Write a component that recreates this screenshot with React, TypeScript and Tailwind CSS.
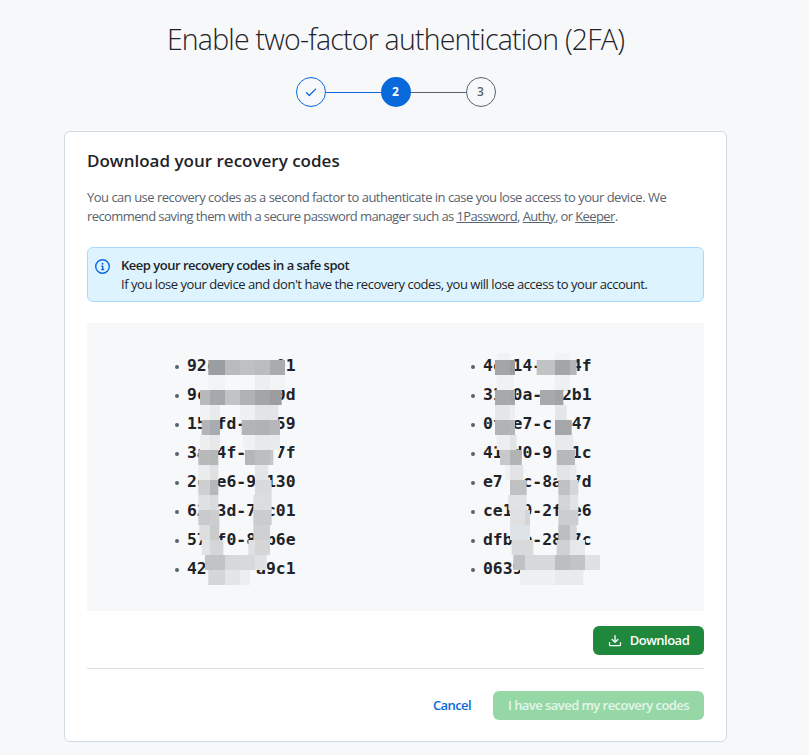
const font = "font-['Open_Sans',sans-serif]";

type Seg = [number, number, string];
type Row = [number, Seg[]];

const leftSmudge: Row[] = [
  [360, [[145, 195, "#9a9ea3"], [195, 240, "#b9bbbd"], [240, 285, "#bfc0c2"], [285, 330, "#bbbcbe"], [330, 375, "#a9abae"]]],
  [375, [[145, 195, "#f3f4f5"], [285, 330, "#eceef0"], [330, 375, "#f3f4f5"]]],
  [390, [[120, 150, "#b7b9bb"], [150, 195, "#a5a9ae"], [195, 240, "#c2c3c5"], [240, 285, "#b0b1b3"], [285, 330, "#a4a5a7"], [330, 365, "#9c9d9f"]]],
  [405, [[120, 150, "#f1f2f3"], [150, 180, "#e8eaec"], [240, 285, "#eff0f1"], [285, 355, "#e3e4e6"]]],
  [420, [[125, 150, "#b3b5b8"], [150, 180, "#a8abaf"], [245, 285, "#b3b4b6"], [285, 330, "#b1b2b4"], [330, 360, "#b6b7b9"]]],
  [435, [[120, 150, "#edeef0"], [150, 180, "#e6e8ea"], [250, 285, "#f0f1f2"], [285, 330, "#e8e9ea"], [330, 360, "#e9eaeb"]]],
  [450, [[115, 150, "#b8b9bb"], [150, 175, "#b5b6b8"], [255, 285, "#b5b6b8"], [285, 330, "#bdbec0"], [330, 340, "#c5c6c8"]]],
  [465, [[115, 150, "#eaecee"], [150, 175, "#dfe1e3"], [285, 325, "#e4e5e7"]]],
  [480, [[115, 150, "#cdcfd1"], [150, 175, "#b5b8ba"], [285, 335, "#d9dadc"]]],
  [495, [[115, 150, "#dfe1e3"], [150, 175, "#d9dbdd"], [280, 335, "#dcdddf"]]],
  [510, [[115, 150, "#c8cacc"], [150, 178, "#cbcdcf"], [280, 335, "#cbcccd"]]],
  [525, [[118, 150, "#dcdee0"], [150, 178, "#c9cbcd"], [280, 330, "#cfd0d2"]]],
  [540, [[125, 150, "#e1e3e5"], [150, 190, "#d4d6d8"], [265, 285, "#dfe0e2"], [285, 330, "#d5d6d8"]]],
  [555, [[135, 195, "#c2c3c5"], [195, 240, "#d6d8da"], [240, 285, "#d7d9db"], [285, 320, "#dfe1e3"]]],
  [570, [[145, 195, "#d4d6d8"], [195, 240, "#e3e5e7"], [240, 270, "#eceef0"]]],
];

const rightSmudge: Row[] = [
  [353, [[110, 150, "#f1f2f4"], [285, 330, "#f2f3f4"]]],
  [360, [[105, 150, "#a4a5a7"], [150, 165, "#9a9c9e"], [230, 285, "#c1c2c4"], [285, 330, "#a4a5a7"], [330, 350, "#b4b5b7"]]],
  [375, [[110, 160, "#f0f1f2"], [285, 330, "#eff0f1"]]],
  [390, [[105, 150, "#a8a9ab"], [150, 165, "#a5a7aa"], [240, 285, "#a8a9ab"], [285, 310, "#a2a3a5"]]],
  [405, [[105, 150, "#e5e6e8"], [150, 165, "#eceef0"], [285, 320, "#e4e6e8"]]],
  [420, [[105, 150, "#b1b4b7"], [150, 165, "#b3b6b9"], [285, 335, "#a5a6a8"]]],
  [435, [[110, 150, "#eceef0"], [150, 170, "#e1e3e5"], [285, 340, "#e9eaec"]]],
  [450, [[120, 150, "#c6c8ca"], [150, 185, "#b1b3b5"], [290, 345, "#b7b8ba"]]],
  [465, [[135, 150, "#f0f1f3"], [150, 190, "#e1e3e5"], [290, 330, "#e2e4e6"], [330, 350, "#e9eaec"]]],
  [480, [[150, 200, "#bfc1c3"], [295, 330, "#bfc2c4"], [330, 355, "#d5d6d8"]]],
  [495, [[145, 200, "#e0e2e4"], [295, 330, "#d3d5d7"], [330, 355, "#e1e3e5"]]],
  [510, [[150, 195, "#dfe0e2"], [195, 210, "#d3d5d7"], [295, 355, "#cccdd0"]]],
  [525, [[150, 210, "#dee3e7"], [295, 330, "#bdbec0"], [330, 350, "#d3d5d7"]]],
  [540, [[155, 220, "#d8dadc"], [290, 330, "#d0d1d3"], [330, 375, "#e6e8ea"]]],
  [555, [[160, 195, "#bfc2c5"], [195, 285, "#d6d8da"], [285, 330, "#bdbec0"], [330, 375, "#c2c3c5"], [375, 420, "#dfe1e3"]]],
  [570, [[180, 285, "#eef0f2"], [285, 370, "#e8eaec"]]],
];

function Smudge({ rows, originX }: { rows: Row[]; originX: number }) {
  return (
    <>
      {rows.map(([y, segs]) =>
        segs.map(([a, b, c]) => (
          <rect
            key={`${y}-${a}`}
            x={originX + a / 3}
            y={y}
            width={(b - a) / 3}
            height={y === 353 ? 7 : 15}
            fill={c}
          />
        )),
      )}
    </>
  );
}

const left = ["92c      01", "9c       0d", "15 fd-   59", "3a 4f-   7f", "2c e6-9 130", "62 3d-7 c01", "57 f0-8 b6e", "42     a9c1"];
const right = ["4c 14-   4f", "31 0a-  2b1", "0f e7-c b47", "41 d0-9  1c", "e7  c-8a 7d", "ce1 9-2f e6", "dfb e-28 7c", "0639"];

function Codes({ items }: { items: string[] }) {
  return (
    <ul className="flex flex-col">
      {items.map((c) => (
        <li key={c} className="flex h-[29px] items-center gap-[8px] font-['DejaVu_Sans_Mono',monospace] text-[16.4px] font-bold whitespace-pre text-[#1f2328]">
          <span className="size-[4px] rounded-full bg-[#59636e]" />
          <span>{c}</span>
        </li>
      ))}
    </ul>
  );
}

export default function App() {
  return (
    <div className={`min-h-[755px] bg-[#f6f8fa] ${font} text-[#1f2328]`}>
      <div className="flex w-[791px] flex-col items-center pt-[17px]">
        <h1 className="h-[45px] text-[28.5px] leading-[45px] font-light tracking-[-0.8px] whitespace-nowrap">
          Enable two-factor authentication (2FA)
        </h1>
        <div className="mt-[15px] flex items-center">
          <div className="flex size-[30px] items-center justify-center rounded-full border border-[#0969da] text-[#0969da]">
            <svg viewBox="0 0 16 16" className="size-[14px]" fill="currentColor">
              <path d="M13.78 4.22a.75.75 0 0 1 0 1.06l-7.25 7.25a.75.75 0 0 1-1.06 0L2.22 9.28a.751.751 0 0 1 .018-1.042.751.751 0 0 1 1.042-.018L6 10.94l6.72-6.72a.75.75 0 0 1 1.06 0Z" />
            </svg>
          </div>
          <div className="h-px w-[55px] bg-[#0969da]" />
          <div className="flex size-[30px] items-center justify-center rounded-full bg-[#0969da] text-[12px] font-bold text-white">2</div>
          <div className="h-px w-[55px] bg-[#59636e]" />
          <div className="flex size-[30px] items-center justify-center rounded-full border border-[#59636e] text-[12px] font-semibold text-[#59636e]">3</div>
        </div>
        <div className="mt-[24px] w-[663px] rounded-md border border-[#d1d9e0] bg-white px-[22px] pt-[16px] pb-[21px]">
          <h2 className="text-[17px] leading-[26px] font-semibold">Download your recovery codes</h2>
          <p className="mt-[14px] text-[13px] leading-[19px] tracking-[-0.51px] whitespace-nowrap text-[#59636e]">
            You can use recovery codes as a second factor to authenticate in case you lose access to your device. We
            <br />
            <span className="tracking-[-0.6px]">
              recommend saving them with a secure password manager such as <a className="underline">1Password</a>,{" "}
              <a className="underline">Authy</a>, or <a className="underline">Keeper</a>.
            </span>
          </p>
          <div className="mt-[21px] flex h-[55px] items-start gap-[11px] rounded-md border border-[#a8d8ff] bg-[#ddf4ff] px-[7px] pt-[8px] text-[13px] leading-[19px] tracking-[-0.46px]">
            <svg viewBox="0 0 16 16" className="mt-[3px] size-[15px] shrink-0" fill="#0969da">
              <path d="M0 8a8 8 0 1 1 16 0A8 8 0 0 1 0 8Zm8-6.5a6.5 6.5 0 1 0 0 13 6.5 6.5 0 0 0 0-13ZM6.5 7.75A.75.75 0 0 1 7.25 7h1a.75.75 0 0 1 .75.75v2.75h.25a.75.75 0 0 1 0 1.5h-2a.75.75 0 0 1 0-1.5h.25v-2h-.25a.75.75 0 0 1-.75-.75ZM8 6a1 1 0 1 1 0-2 1 1 0 0 1 0 2Z" />
            </svg>
            <div className="whitespace-nowrap">
              <div className="font-semibold tracking-[-0.5px]">Keep your recovery codes in a safe spot</div>
              <div>If you lose your device and don't have the recovery codes, you will lose access to your account.</div>
            </div>
          </div>
          <div className="relative mt-[21px] flex h-[288px] bg-[#f6f8fa] pt-[29px]">
            <div className="ml-[88px] w-[296px]">
              <Codes items={left} />
            </div>
            <Codes items={right} />
            <svg viewBox="87 323 617 288" className="absolute top-0 left-0 h-[288px] w-[617px]">
              <Smudge rows={leftSmudge} originX={160} />
              <Smudge rows={rightSmudge} originX={460} />
            </svg>
          </div>
          <div className="mt-[15px] flex justify-end">
            <button className="flex h-[29px] w-[111px] items-center justify-center gap-[8px] rounded-md bg-[#1f883d] text-[13px] font-semibold tracking-[-0.5px] text-white">
              <svg viewBox="0 0 16 16" className="size-[14px]" fill="currentColor">
                <path d="M2.75 14A1.75 1.75 0 0 1 1 12.25v-2.5a.75.75 0 0 1 1.5 0v2.5c0 .138.112.25.25.25h10.5a.25.25 0 0 0 .25-.25v-2.5a.75.75 0 0 1 1.5 0v2.5A1.75 1.75 0 0 1 13.25 14Z" />
                <path d="M7.25 7.689V2a.75.75 0 0 1 1.5 0v5.689l1.97-1.969a.749.749 0 1 1 1.06 1.06l-3.25 3.25a.749.749 0 0 1-1.06 0L4.22 6.78a.749.749 0 1 1 1.06-1.06l1.97 1.969Z" />
              </svg>
              Download
            </button>
          </div>
          <div className="mt-[13px] h-px bg-[#d8dee4]" />
          <div className="mt-[22px] flex items-center justify-end gap-[22px]">
            <a className="text-[13px] font-semibold tracking-[-0.6px] text-[#0969da]">Cancel</a>
            <button className="flex h-[29px] w-[211px] items-center justify-center rounded-md bg-[#95d8a6] text-[13px] font-semibold tracking-[-0.55px] text-[#e4f5e9]">
              I have saved my recovery codes
            </button>
          </div>
        </div>
      </div>
    </div>
  );
}
